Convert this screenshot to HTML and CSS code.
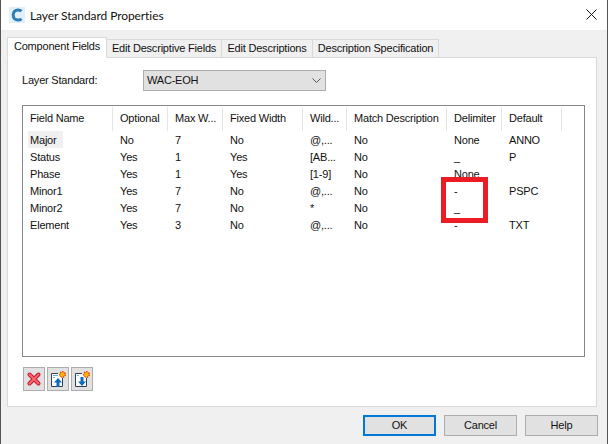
FILE: index.html
```html
<!DOCTYPE html>
<html lang="en">
<head>
<meta charset="utf-8">
<title>Layer Standard Properties</title>
<link rel="stylesheet" href="styles.css">
</head>
<body>
<div class="window">
  <header class="titlebar">
    <svg class="app-icon" width="16" height="16" viewBox="0 0 16 16"><rect width="16" height="16" fill="#e3eff8"/><path d="M12.500 4.200C11.400 3.200 10.200 3 9 3 6.200 3 4.200 5 4.200 8s2 5 4.800 5c1.200 0 2.400-.3 3.500-1.200" fill="none" stroke="#2a7db5" stroke-width="3"/></svg>
    <span class="title">Layer Standard Properties</span>
    <svg class="close" width="11" height="11" viewBox="0 0 11 11"><path d="M.5.5l10 10M10.500.5l-10 10" stroke="#111" stroke-width="1" fill="none"/></svg>
  </header>
  <main class="client">
    <nav class="tabs">
      <span class="tab active t1">Component Fields</span>
      <span class="tab t2">Edit Descriptive Fields</span>
      <span class="tab t3">Edit Descriptions</span>
      <span class="tab t4">Description Specification</span>
    </nav>
    <section class="pane">
      <div class="std-row">
        <label class="std-label">Layer Standard:</label>
        <div class="combo"><span>WAC-EOH</span>
          <svg width="9" height="5" viewBox="0 0 9 5"><path d="M.5.5l4 4 4-4" fill="none" stroke="#555"/></svg>
        </div>
      </div>
      <div class="list">
        <div class="row head">
          <span>Field Name</span><span>Optional</span><span>Max W...</span><span>Fixed Width</span><span>Wild...</span><span>Match Description</span><span>Delimiter</span><span>Default</span><span></span>
        </div>
        <div class="row first"><span class="sel">Major</span><span>No</span><span>7</span><span>No</span><span>@,...</span><span>No</span><span>None</span><span>ANNO</span></div>
        <div class="row"><span>Status</span><span>Yes</span><span>1</span><span>Yes</span><span>[AB...</span><span>No</span><span>_</span><span>P</span></div>
        <div class="row"><span>Phase</span><span>Yes</span><span>1</span><span>Yes</span><span>[1-9]</span><span>No</span><span>None</span><span></span></div>
        <div class="row"><span>Minor1</span><span>Yes</span><span>7</span><span>No</span><span>@,...</span><span>No</span><span>-</span><span>PSPC</span></div>
        <div class="row"><span>Minor2</span><span>Yes</span><span>7</span><span>No</span><span>*</span><span>No</span><span>_</span><span></span></div>
        <div class="row"><span>Element</span><span>Yes</span><span>3</span><span>No</span><span>@,...</span><span>No</span><span>-</span><span>TXT</span></div>
      </div>
      <div class="tools">
        <button class="tool"><svg width="16" height="16" viewBox="0 0 16 16"><path d="M3.500 3.500l9 9M12.500 3.500l-9 9" stroke="#c8102e" stroke-width="4" stroke-linecap="round"/><path d="M3.500 3.500l9 9M12.500 3.500l-9 9" stroke="#f9686c" stroke-width="2.200" stroke-linecap="round"/></svg></button>
        <button class="tool"><svg width="18" height="18" viewBox="0 0 18 18"><path d="M9 3.500H2.500v13H13.500V8" fill="#fff" stroke="#33414f"/><path d="M4 5.500h5" stroke="#5fb0e8"/><path d="M4 7.500h2" stroke="#5fb0e8"/><path d="M9 8l4 4.500h-2.500V17h-3v-4.500H5z" fill="#0f69bd"/><circle cx="13.500" cy="4.500" r="2.800" fill="#f7b500" stroke="#e8320c" stroke-width="1.200" stroke-dasharray="1.500 1"/></svg></button>
        <button class="tool"><svg width="18" height="18" viewBox="0 0 18 18"><path d="M9 3.500H2.500v13H13.500V8" fill="#fff" stroke="#33414f"/><path d="M4 5.500h2" stroke="#5fb0e8"/><path d="M7.500 7h3v4.500H13L9 16l-4-4.500h2.500z" fill="#0f69bd"/><circle cx="13.500" cy="4.500" r="2.800" fill="#f7b500" stroke="#e8320c" stroke-width="1.200" stroke-dasharray="1.500 1"/></svg></button>
      </div>
      <div class="mark"></div>
    </section>
    <footer class="actions">
      <button class="btn default">OK</button>
      <button class="btn">Cancel</button>
      <button class="btn">Help</button>
    </footer>
  </main>
</div>
</body>
</html>
```
FILE: styles.css
```css
* { box-sizing: border-box; }
html, body { margin: 0; padding: 0; }
body {
  width: 608px;
  height: 444px;
  overflow: hidden;
  font-family: "Liberation Sans", Arial, sans-serif;
  font-size: 11px;
  line-height: 17px;
  letter-spacing: -0.2px;
  color: #111;
  background: #f0f0f0;
}
.window {
  width: 608px;
  height: 444px;
  border-left: 1px solid #555;
  border-right: 1px solid #555;
  display: flex;
  flex-direction: column;
}
.titlebar {
  height: 30px;
  background: #fff;
  display: flex;
  align-items: center;
  padding: 0 7px 0 8px;
  flex: none;
}
.app-icon { margin-right: 5px; }
.title {
  flex: 1;
  font-family: "Lato", "Noto Sans", sans-serif;
  font-size: 12px;
  letter-spacing: -0.08px;
}
.close { margin-right: 3px; margin-bottom: 1px; }
.client {
  flex: 1;
  background: #f0f0f0;
  padding: 7px 6px 0 6px;
  display: flex;
  flex-direction: column;
}
.tabs {
  display: flex;
  height: 21px;
  align-items: flex-end;
  margin-bottom: -1px;
  position: relative;
  z-index: 1;
}
.tab {
  height: 19px;
  border: 1px solid #d9d9d9;
  border-left: 0;
  background: #f0f0f0;
  text-align: center;
  white-space: nowrap;
  line-height: 17px;
}
.tab.active {
  height: 21px;
  background: #fff;
  border-left: 1px solid #d9d9d9;
  border-bottom-color: #fff;
}
.t1 { width: 100px; }
.t2 { width: 115px; }
.t3 { width: 91px; }
.t4 { width: 126px; }
.pane {
  position: relative;
  width: 590px;
  height: 350px;
  background: #fff;
  border: 1px solid #d9d9d9;
  padding: 12px 11px 0 14px;
}
.std-row {
  display: flex;
  align-items: center;
  height: 21px;
}
.std-label { width: 121px; }
.combo {
  width: 183px;
  height: 21px;
  background: #e1e1e1;
  border: 1px solid #adadad;
  display: flex;
  align-items: center;
  justify-content: space-between;
  padding: 0 3px 0 3px;
}
.combo svg { margin-right: 1px; }
.list {
  margin-top: 14px;
  width: 563px;
  height: 252px;
  border: 1px solid #82878c;
  padding-top: 1px;
}
.row {
  display: grid;
  grid-template-columns: 90px 55px 55px 80px 44px 100px 55px 60px 1fr;
  height: 17px;
}
.row > span {
  padding-left: 7px;
  padding-top: 1px;
  white-space: nowrap;
  overflow: hidden;
}
.head {
  height: 24px;
  align-items: stretch;
}
.head > span {
  padding-top: 0;
  line-height: 23px;
  border-right: 1px solid #e5e5e5;
}
.head > span:last-child { border-right: 0; }
.sel { background: #f0f0f0; margin-left: 5px; margin-right: 50px; padding-left: 2px !important; }
.tools {
  display: flex;
  gap: 2px;
  margin-top: 10px;
  margin-left: 1px;
}
.tool {
  width: 22px;
  height: 24px;
  background: #e1e1e1;
  border: 1px solid #adadad;
  padding: 0;
  display: flex;
  align-items: center;
  justify-content: center;
}
.mark {
  position: absolute;
  left: 433px;
  top: 119px;
  width: 47px;
  height: 46px;
  border: 5px solid #ed1c24;
}
.actions {
  display: flex;
  justify-content: flex-end;
  gap: 8px;
  padding: 8px 3px 0 0;
}
.btn {
  width: 73px;
  height: 21px;
  background: #e1e1e1;
  border: 1px solid #adadad;
  padding: 0;
  font: inherit;
  letter-spacing: inherit;
  color: #111;
}
.btn.default { border: 2px solid #0078d7; }
```
